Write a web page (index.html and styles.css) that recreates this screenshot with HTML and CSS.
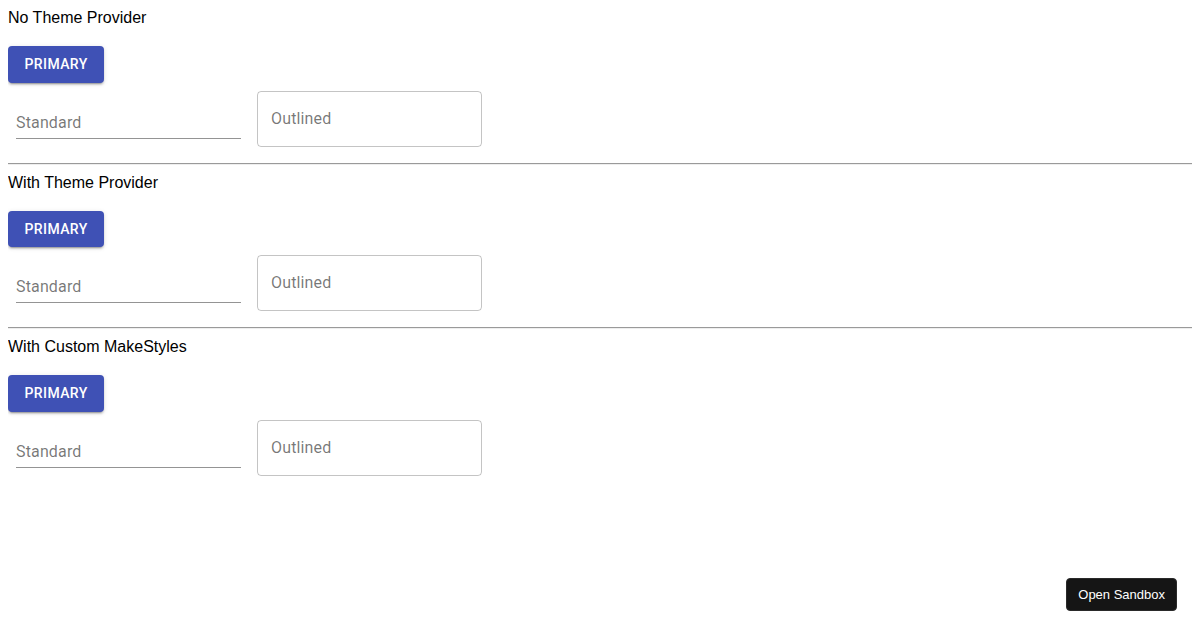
FILE: index.html
```html
<!DOCTYPE html>
<html>
<head>
<meta charset="utf-8">
<link rel="stylesheet" href="styles.css">
</head>
<body>
  <section class="demo">
    <div class="title">No Theme Provider</div>
    <div class="btn-row"><button class="btn-primary">Primary</button></div>
    <form class="fields">
      <div class="field standard"><label class="label">Standard</label><div class="input-std"><input type="text"></div></div>
      <div class="field outlined"><label class="label">Outlined</label><div class="input-out"><input type="text"></div></div>
    </form>
  </section>
  <hr class="sep">
  <section class="demo">
    <div class="title">With Theme Provider</div>
    <div class="btn-row"><button class="btn-primary">Primary</button></div>
    <form class="fields">
      <div class="field standard"><label class="label">Standard</label><div class="input-std"><input type="text"></div></div>
      <div class="field outlined"><label class="label">Outlined</label><div class="input-out"><input type="text"></div></div>
    </form>
  </section>
  <hr class="sep">
  <section class="demo">
    <div class="title">With Custom MakeStyles</div>
    <div class="btn-row"><button class="btn-primary">Primary</button></div>
    <form class="fields">
      <div class="field standard"><label class="label">Standard</label><div class="input-std"><input type="text"></div></div>
      <div class="field outlined"><label class="label">Outlined</label><div class="input-out"><input type="text"></div></div>
    </form>
  </section>
  <a class="sandbox-btn">Open Sandbox</a>
</body>
</html>
```

FILE: styles.css
```css
html, body {
  background: #fff;
}
body {
  margin: 8px;
  font-family: "Liberation Sans", Arial, sans-serif;
  font-size: 16px;
  color: #000;
}
.title {
  line-height: normal;
  padding-top: 1px;
}
.btn-row {
  padding-top: 19px;
  height: 36.5px;
}
.btn-primary {
  display: inline-flex;
  align-items: center;
  justify-content: center;
  box-sizing: border-box;
  min-width: 64px;
  height: 36.5px;
  padding: 6px 16.5px;
  border: 0;
  border-radius: 4px;
  background: #3f51b5;
  color: #fff;
  font-family: Roboto, "Liberation Sans", sans-serif;
  font-weight: 500;
  font-size: 14px;
  line-height: 1.75;
  letter-spacing: 0.02857em;
  text-transform: uppercase;
  box-shadow: 0px 3px 1px -2px rgba(0,0,0,0.2), 0px 2px 2px 0px rgba(0,0,0,0.14), 0px 1px 5px 0px rgba(0,0,0,0.12);
  cursor: pointer;
  vertical-align: top;
}
.fields {
  margin: 0;
  display: flex;
  align-items: flex-start;
}
.field {
  display: flex;
  flex-direction: column;
  position: relative;
  margin: 8px;
  width: 225px;
  font-family: Roboto, "Liberation Sans", sans-serif;
}
.label {
  position: absolute;
  left: 0;
  top: 0;
  color: rgba(0,0,0,0.54);
  font-size: 16px;
  line-height: 1;
  letter-spacing: 0.00938em;
  pointer-events: none;
}
.standard .label {
  transform: translate(0, 24px);
}
.outlined .label {
  transform: translate(14px, 20px);
}
.input-std {
  margin-top: 16px;
  position: relative;
  border-bottom: 1px solid rgba(0,0,0,0.42);
  display: flex;
}
.input-out {
  position: relative;
  border: 1px solid rgba(0,0,0,0.23);
  border-radius: 4px;
  display: flex;
}
.field input {
  border: 0;
  outline: 0;
  background: transparent;
  font: inherit;
  font-size: 16px;
  width: 100%;
  box-sizing: content-box;
  height: 19px;
  margin: 0;
}
.input-std input {
  padding: 6px 0 6px;
}
.input-out input {
  padding: 17.5px 14px;
}
.sep {
  margin: 8px 0;
  border: 0;
  border-top: 1px solid #9a9a9a;
  border-bottom: 1px solid #eeeeee;
  height: 0;
}
.sandbox-btn {
  position: fixed;
  right: 23px;
  bottom: 19px;
  background: #151515;
  color: #fff;
  font-family: "Liberation Sans", Arial, sans-serif;
  font-size: 13px;
  line-height: 15px;
  padding: 8px 11px;
  border-radius: 4px;
  border: 1px solid #2a2a2a;
}
```
